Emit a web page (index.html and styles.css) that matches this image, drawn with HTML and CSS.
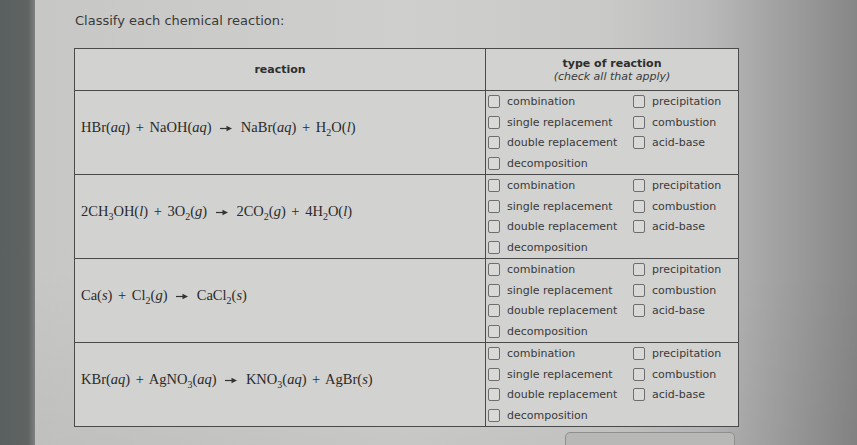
FILE: index.html
```html
<!DOCTYPE html>
<html>
<head>
<meta charset="utf-8">
<link rel="stylesheet" href="styles.css">
</head>
<body>
<div class="screen">
  <div class="strip"></div>
  <div class="page">
    <p class="title">Classify each chemical reaction:</p>
    <table class="rx">
      <thead>
        <tr>
          <th class="h-react">reaction</th>
          <th class="h-type"><b>type of reaction</b><i>(check all that apply)</i></th>
        </tr>
      </thead>
      <tbody>
        <tr>
          <td class="eq">HBr(<i>aq</i>) + NaOH(<i>aq</i>) <svg class="arr" width="12" height="7" viewBox="0 0 12 7"><path d="M0 3.5H8" stroke="#333" stroke-width="1.2"/><path d="M6.5 0.8L12 3.5L6.5 6.2Z" fill="#333"/></svg> NaBr(<i>aq</i>) + H<sub>2</sub>O(<i>l</i>)</td>
          <td class="opts">
            <div class="grid">
              <label class="opt"><span class="cb"></span>combination</label>
              <label class="opt"><span class="cb"></span>precipitation</label>
              <label class="opt"><span class="cb"></span>single replacement</label>
              <label class="opt"><span class="cb"></span>combustion</label>
              <label class="opt"><span class="cb"></span>double replacement</label>
              <label class="opt"><span class="cb"></span>acid-base</label>
              <label class="opt"><span class="cb"></span>decomposition</label>
            </div>
          </td>
        </tr>
        <tr>
          <td class="eq">2CH<sub>3</sub>OH(<i>l</i>) + 3O<sub>2</sub>(<i>g</i>) <svg class="arr" width="12" height="7" viewBox="0 0 12 7"><path d="M0 3.5H8" stroke="#333" stroke-width="1.2"/><path d="M6.5 0.8L12 3.5L6.5 6.2Z" fill="#333"/></svg> 2CO<sub>2</sub>(<i>g</i>) + 4H<sub>2</sub>O(<i>l</i>)</td>
          <td class="opts">
            <div class="grid">
              <label class="opt"><span class="cb"></span>combination</label>
              <label class="opt"><span class="cb"></span>precipitation</label>
              <label class="opt"><span class="cb"></span>single replacement</label>
              <label class="opt"><span class="cb"></span>combustion</label>
              <label class="opt"><span class="cb"></span>double replacement</label>
              <label class="opt"><span class="cb"></span>acid-base</label>
              <label class="opt"><span class="cb"></span>decomposition</label>
            </div>
          </td>
        </tr>
        <tr>
          <td class="eq">Ca(<i>s</i>) + Cl<sub>2</sub>(<i>g</i>) <svg class="arr" width="12" height="7" viewBox="0 0 12 7"><path d="M0 3.5H8" stroke="#333" stroke-width="1.2"/><path d="M6.5 0.8L12 3.5L6.5 6.2Z" fill="#333"/></svg> CaCl<sub>2</sub>(<i>s</i>)</td>
          <td class="opts">
            <div class="grid">
              <label class="opt"><span class="cb"></span>combination</label>
              <label class="opt"><span class="cb"></span>precipitation</label>
              <label class="opt"><span class="cb"></span>single replacement</label>
              <label class="opt"><span class="cb"></span>combustion</label>
              <label class="opt"><span class="cb"></span>double replacement</label>
              <label class="opt"><span class="cb"></span>acid-base</label>
              <label class="opt"><span class="cb"></span>decomposition</label>
            </div>
          </td>
        </tr>
        <tr>
          <td class="eq">KBr(<i>aq</i>) + AgNO<sub>3</sub>(<i>aq</i>) <svg class="arr" width="12" height="7" viewBox="0 0 12 7"><path d="M0 3.5H8" stroke="#333" stroke-width="1.2"/><path d="M6.5 0.8L12 3.5L6.5 6.2Z" fill="#333"/></svg> KNO<sub>3</sub>(<i>aq</i>) + AgBr(<i>s</i>)</td>
          <td class="opts">
            <div class="grid">
              <label class="opt"><span class="cb"></span>combination</label>
              <label class="opt"><span class="cb"></span>precipitation</label>
              <label class="opt"><span class="cb"></span>single replacement</label>
              <label class="opt"><span class="cb"></span>combustion</label>
              <label class="opt"><span class="cb"></span>double replacement</label>
              <label class="opt"><span class="cb"></span>acid-base</label>
              <label class="opt"><span class="cb"></span>decomposition</label>
            </div>
          </td>
        </tr>
      </tbody>
    </table>
    <div class="btnrow"><div class="btn"></div></div>
  </div>
</div>
</body>
</html>
```

FILE: styles.css
```css
html, body {
  margin: 0;
  padding: 0;
  width: 857px;
  height: 445px;
  overflow: hidden;
}
.screen {
  display: flex;
  width: 857px;
  height: 445px;
  background: #8a8a8a;
}
.strip {
  width: 35px;
  flex: none;
  background: linear-gradient(90deg, #5a605f 0%, #5f6463 80%, #7d8180 100%);
}
.page {
  flex: 1;
  padding-left: 39px;
  background:
    linear-gradient(180deg, rgba(0,0,0,0) 60%, rgba(0,0,0,0.04) 100%),
    linear-gradient(90deg, #c7c7c5 0%, #cfcfcd 45%, #c9c9c8 70%, #b9b9b9 82%, #9a9a9a 93%, #868686 100%);
  font-family: "DejaVu Sans", Verdana, sans-serif;
  color: #333;
}
.title {
  margin: 12px 0 0 1px;
  font-size: 13px;
  line-height: 17px;
  color: #3a3a3a;
}
.rx {
  margin-top: 19px;
  width: 665px;
  border-collapse: collapse;
  border: 1px solid #4a4a4a;
  background: #d2d2d0;
}
.rx th, .rx td {
  border: 1px solid #4a4a4a;
  padding: 0;
}
.rx th {
  height: 41px;
  font-size: 11px;
  color: #2e2e2e;
}
.h-react {
  width: 410px;
  font-weight: bold;
}
.h-type {
  font-weight: normal;
  line-height: 13px;
  padding-top: 2px;
}
.h-type b, .h-type i {
  display: block;
}
.h-type b { font-weight: bold; }
.h-type i { color: #3a3a3a; }
.eq {
  font-family: "Liberation Serif", "Times New Roman", serif;
  font-size: 14.5px;
  color: #2a2a2a;
  padding-left: 6px !important;
  padding-bottom: 10px !important;
  vertical-align: middle;
  word-spacing: 2px;
  white-space: nowrap;
}
.eq sub {
  font-size: 10px;
  line-height: 0;
}
.arr {
  margin: 0 3px;
  vertical-align: middle;
}
.opts {
  vertical-align: top;
}
.grid {
  display: grid;
  grid-template-columns: 145px 1fr;
  grid-auto-rows: 20.75px;
  padding-left: 2px;
}
.opt {
  display: flex;
  align-items: center;
  gap: 7px;
  font-size: 11px;
  color: #3a3a3a;
  white-space: nowrap;
}
.cb {
  width: 10px;
  height: 11px;
  border: 1px solid #6e6e6e;
  border-radius: 2px;
  background: #d9d9d7;
  flex: none;
}
.btnrow {
  display: flex;
  justify-content: flex-end;
  width: 661px;
  padding-top: 5px;
}
.btn {
  width: 168px;
  height: 30px;
  border: 1px solid #8e8e8e;
  border-radius: 5px;
  background: #b8b8b7;
}
```
